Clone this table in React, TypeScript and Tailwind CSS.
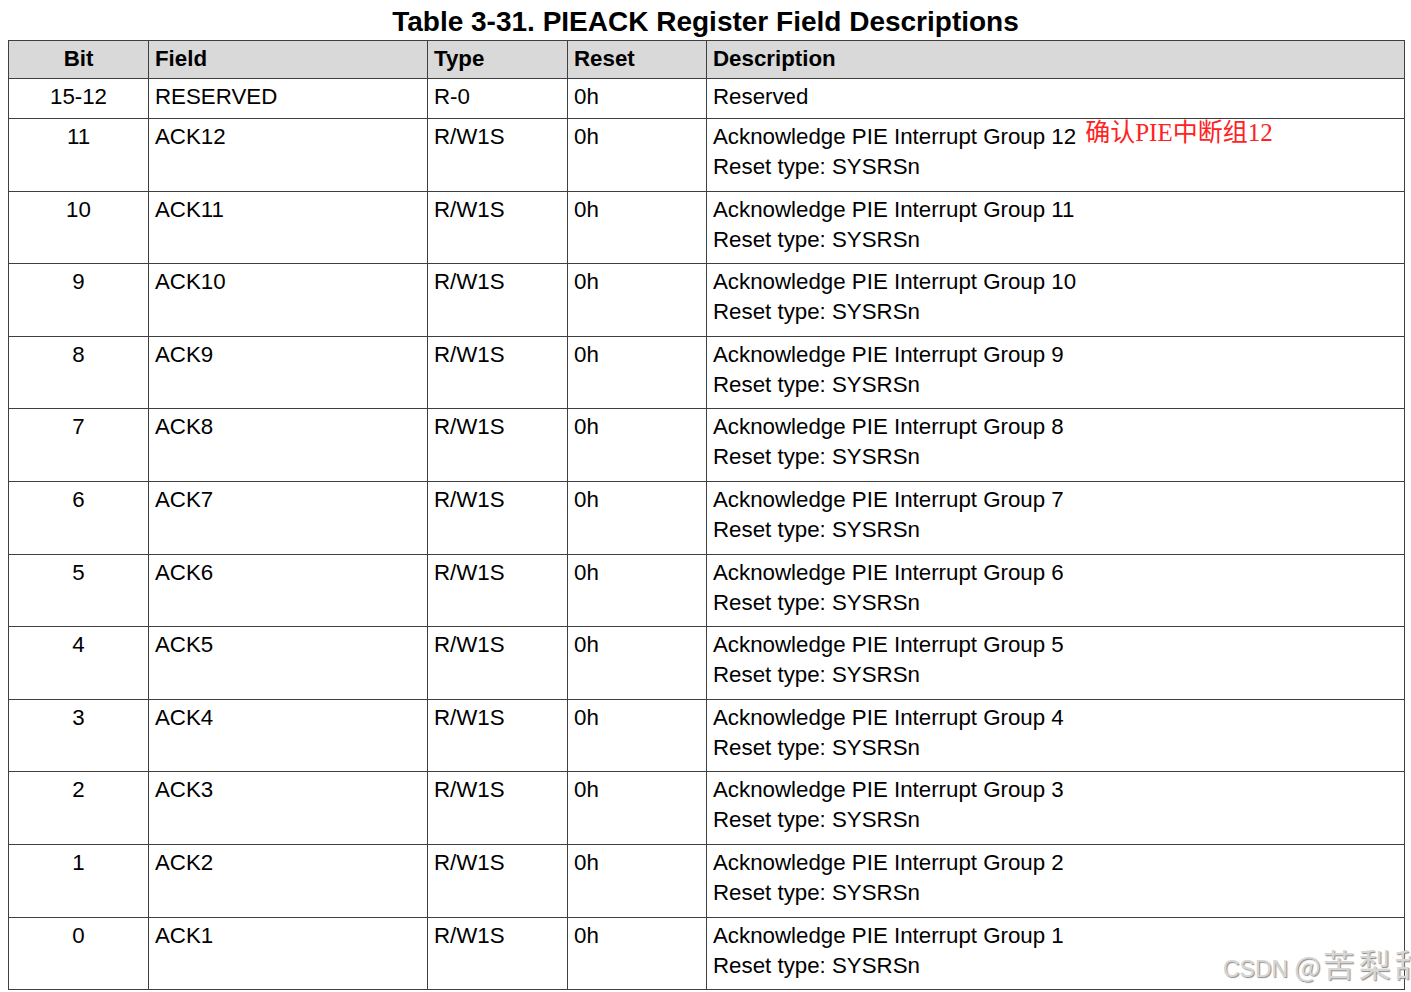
const rows = [
  { bit: "15-12", field: "RESERVED", type: "R-0", reset: "0h", desc: "Reserved", h: "h-[40px]" },
  { bit: "11", field: "ACK12", type: "R/W1S", reset: "0h", desc: "Acknowledge PIE Interrupt Group 12", note: true, h: "h-[73px]" },
  { bit: "10", field: "ACK11", type: "R/W1S", reset: "0h", desc: "Acknowledge PIE Interrupt Group 11", h: "h-[72px]" },
  { bit: "9", field: "ACK10", type: "R/W1S", reset: "0h", desc: "Acknowledge PIE Interrupt Group 10", h: "h-[73px]" },
  { bit: "8", field: "ACK9", type: "R/W1S", reset: "0h", desc: "Acknowledge PIE Interrupt Group 9", h: "h-[72px]" },
  { bit: "7", field: "ACK8", type: "R/W1S", reset: "0h", desc: "Acknowledge PIE Interrupt Group 8", h: "h-[73px]" },
  { bit: "6", field: "ACK7", type: "R/W1S", reset: "0h", desc: "Acknowledge PIE Interrupt Group 7", h: "h-[73px]" },
  { bit: "5", field: "ACK6", type: "R/W1S", reset: "0h", desc: "Acknowledge PIE Interrupt Group 6", h: "h-[72px]" },
  { bit: "4", field: "ACK5", type: "R/W1S", reset: "0h", desc: "Acknowledge PIE Interrupt Group 5", h: "h-[73px]" },
  { bit: "3", field: "ACK4", type: "R/W1S", reset: "0h", desc: "Acknowledge PIE Interrupt Group 4", h: "h-[72px]" },
  { bit: "2", field: "ACK3", type: "R/W1S", reset: "0h", desc: "Acknowledge PIE Interrupt Group 3", h: "h-[73px]" },
  { bit: "1", field: "ACK2", type: "R/W1S", reset: "0h", desc: "Acknowledge PIE Interrupt Group 2", h: "h-[73px]" },
  { bit: "0", field: "ACK1", type: "R/W1S", reset: "0h", desc: "Acknowledge PIE Interrupt Group 1", h: "h-[72px]" },
];

const cell = "border border-[#3f3f3f] align-top px-[6px] pt-[3px] leading-[30px]";
const head = "border border-[#3f3f3f] px-[6px] pb-[1px] align-middle";

export default function App() {
  return (
    <div className="relative min-h-screen overflow-hidden bg-white font-['Liberation_Sans','Noto_Sans_CJK_SC',sans-serif] text-[22.3px] text-black">
      <h1 className="h-[40px] pt-[5px] text-center text-[28px] font-bold leading-[34px]">
        Table 3-31. PIEACK Register Field Descriptions
      </h1>

      <table className="ml-[8px] w-[1397px] table-fixed border-collapse">
        <colgroup>
          <col className="w-[140px]" />
          <col className="w-[279px]" />
          <col className="w-[140px]" />
          <col className="w-[139px]" />
          <col />
        </colgroup>
        <thead>
          <tr className="h-[38px] bg-[#d9d9d9] font-bold">
            <th className={`${head} text-center`}>Bit</th>
            <th className={`${head} text-left`}>Field</th>
            <th className={`${head} text-left`}>Type</th>
            <th className={`${head} text-left`}>Reset</th>
            <th className={`${head} text-left`}>Description</th>
          </tr>
        </thead>
        <tbody>
          {rows.map((r) => (
            <tr key={r.bit} className={r.h}>
              <td className={`${cell} text-center`}>{r.bit}</td>
              <td className={cell}>{r.field}</td>
              <td className={cell}>{r.type}</td>
              <td className={cell}>{r.reset}</td>
              <td className={cell}>
                <div className="whitespace-nowrap">
                  {r.desc}
                  {r.note && (
                    <span className="ml-[9px] align-[3px] font-['Liberation_Serif','Noto_Sans_CJK_SC',serif] text-[25px] leading-[0] text-[#ff2222]">
                      确认PIE中断组12
                    </span>
                  )}
                </div>
                {r.desc !== "Reserved" && <div>Reset type: SYSRSn</div>}
              </td>
            </tr>
          ))}
        </tbody>
      </table>

      {/* watermark, cut by the right edge like in the screenshot */}
      <div className="pointer-events-none absolute left-[1223px] top-[939px] flex items-baseline whitespace-nowrap text-[#d6d6d6] [text-shadow:1px_1px_1px_#8c8c8c]">
        <span className="font-['Liberation_Sans',sans-serif] text-[23px]">CSDN</span>
        <span className="ml-[6px] font-['Noto_Sans_CJK_SC',sans-serif] text-[28px]">@</span>
        <span className="ml-[2px] font-['Noto_Sans_CJK_SC',sans-serif] text-[32px] tracking-[4px]">苦梨甜</span>
      </div>
    </div>
  );
}
